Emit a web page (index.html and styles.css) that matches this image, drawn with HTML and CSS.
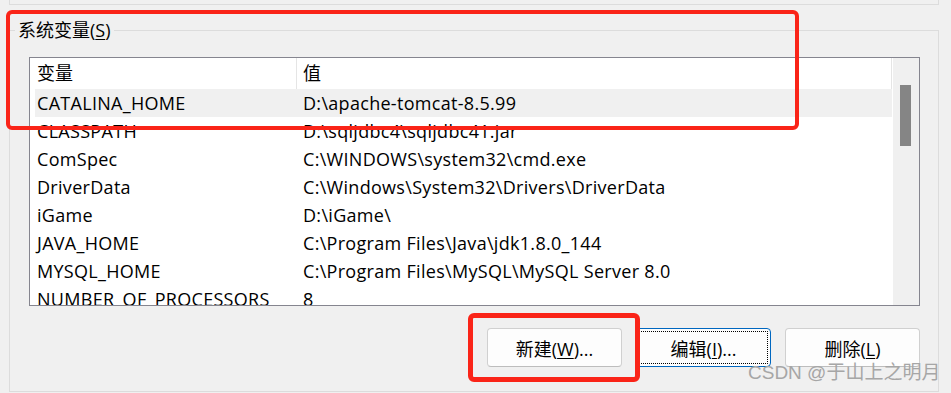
FILE: index.html
```html
<!DOCTYPE html>
<html lang="zh-CN">
<head>
    <meta charset="UTF-8">
    <title>环境变量</title>
    <link rel="stylesheet" href="styles.css">
</head>
<body>
    <div class="prev-group"></div>

    <fieldset class="group">
        <legend>系统变量(<u>S</u>)</legend>
        <div class="listview">
            <div class="lv-main">
                <div class="lv-header">
                    <div class="col-name">变量</div>
                    <div class="col-value">值</div>
                </div>
                <div class="lv-body">
                    <div class="lv-row selected"><span>CATALINA_HOME</span><span>D:\apache-tomcat-8.5.99</span></div>
                    <div class="lv-row"><span>CLASSPATH</span><span>D:\sqljdbc4\sqljdbc41.jar</span></div>
                    <div class="lv-row"><span>ComSpec</span><span>C:\WINDOWS\system32\cmd.exe</span></div>
                    <div class="lv-row"><span>DriverData</span><span>C:\Windows\System32\Drivers\DriverData</span></div>
                    <div class="lv-row"><span>iGame</span><span>D:\iGame\</span></div>
                    <div class="lv-row"><span>JAVA_HOME</span><span>C:\Program Files\Java\jdk1.8.0_144</span></div>
                    <div class="lv-row"><span>MYSQL_HOME</span><span>C:\Program Files\MySQL\MySQL Server 8.0</span></div>
                    <div class="lv-row"><span>NUMBER_OF_PROCESSORS</span><span>8</span></div>
                </div>
            </div>
            <div class="scrollbar"><div class="thumb"></div></div>
        </div>
        <div class="buttons">
            <button class="btn">新建(<u>W</u>)...</button>
            <button class="btn focused">编辑(<u>I</u>)...</button>
            <button class="btn">删除(<u>L</u>)</button>
        </div>
    </fieldset>

    <!-- 标注 -->
    <div class="mark mark-vars"></div>
    <div class="mark mark-new"></div>
    <div class="watermark">CSDN @于山上之明月</div>
</body>
</html>
```

FILE: styles.css
```css
body {
    margin: 0;
    width: 951px;
    height: 393px;
    overflow: hidden;
    position: relative;
    background-color: #f0f0f0;
    color: #000;
    font-family: 'Open Sans', 'Noto Sans CJK SC', sans-serif;
    font-size: 18px;
}
.prev-group {
    margin-left: 9px;
    width: 930px;
    height: 5px;
    box-sizing: border-box;
    border: 1px solid #dcdcdc;
    border-top: none;
}
.group {
    margin: 13px 0 0 9px;
    width: 930px;
    box-sizing: border-box;
    padding: 0 0 24px 0;
    border: 1px solid #dcdcdc;
    min-width: 0;
}
.group legend {
    margin-left: 5px;
    padding: 0 3px;
    line-height: 25px;
}
u {
    text-underline-offset: 2px;
}
.listview {
    margin: 14px 18px 0 19px;
    height: 249px;
    box-sizing: border-box;
    border: 1px solid #85858f;
    background-color: #fff;
    display: flex;
}
.lv-main {
    flex: 1;
    overflow: hidden;
}
.lv-header {
    height: 31px;
    line-height: 31px;
    display: grid;
    grid-template-columns: 267px 1fr;
    margin-right: 1px;
    border-right: 1px solid #e5e5e5;
}
.col-name {
    padding-left: 7px;
    border-right: 1px solid #e5e5e5;
}
.col-value {
    padding-left: 6px;
}
.lv-body {
    height: 216px;
    overflow: hidden;
}
.lv-row {
    margin: 0 1px 0 5px;
    padding-left: 2px;
    height: 28px;
    line-height: 28px;
    display: grid;
    grid-template-columns: 266px 1fr;
    white-space: nowrap;
    letter-spacing: 0.3px;
}
.lv-row.selected {
    background-color: #f0f0f0;
}
.scrollbar {
    width: 26px;
    background-color: #f0f0f0;
}
.thumb {
    margin: 27px 0 0 7px;
    width: 11px;
    height: 61px;
    background-color: #858585;
}
.buttons {
    margin: 22px 18px 0 0;
    display: flex;
    justify-content: flex-end;
    gap: 14px;
}
.btn {
    width: 135px;
    height: 39px;
    background-color: #fdfdfd;
    border: 1px solid #d0d0d0;
    border-bottom-color: #bdbdbd;
    border-radius: 4px;
    font-family: inherit;
    font-size: 18px;
    color: #000;
    padding: 0;
}
.btn.focused {
    border: 1px solid #0067c0;
    outline: 1px dotted #000;
    outline-offset: -4px;
}
.mark {
    position: absolute;
    box-sizing: border-box;
    border: 4px solid #fa2418;
    border-radius: 6px;
}
.mark-vars {
    left: 6px;
    top: 10px;
    width: 793px;
    height: 120px;
}
.mark-new {
    left: 468px;
    top: 313px;
    width: 172px;
    height: 69px;
    border-width: 5px;
}
.watermark {
    position: absolute;
    left: 748px;
    top: 361px;
    font-family: 'Liberation Sans', 'Noto Sans CJK SC', sans-serif;
    font-size: 19px;
    line-height: 24px;
    color: #a6a6a6;
    white-space: nowrap;
}
```
